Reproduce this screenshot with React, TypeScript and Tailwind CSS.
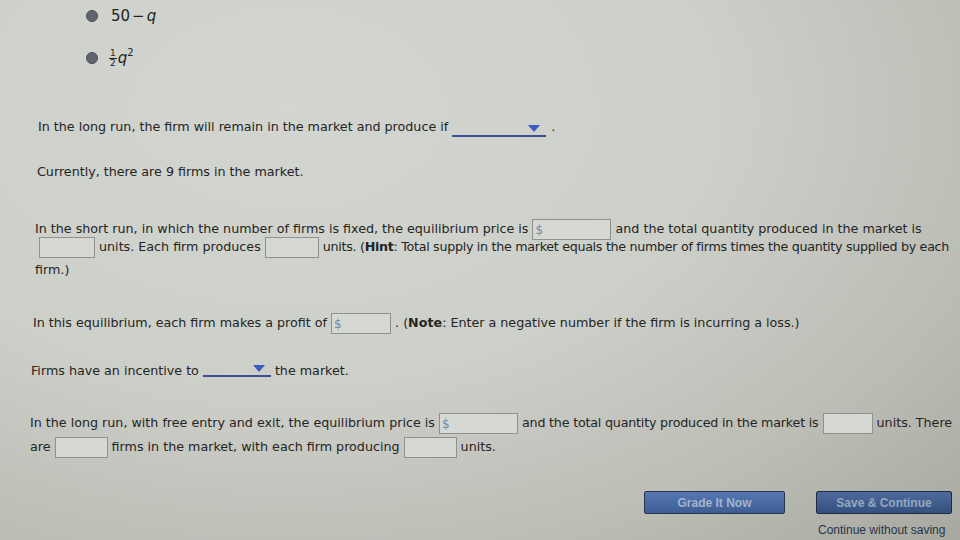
import React from 'react';

function Radio() {
  return <span className="inline-block h-[12px] w-[12px] rounded-full border border-[#4a4c55] bg-[#62646f]" />;
}

function Box({ w, dollar }: { w: string; dollar?: boolean }) {
  return (
    <span className={`my-[-3px] inline-flex h-[21px] ${w} items-center border border-[#8f918c] bg-[#d6d8d3] px-[2px] align-middle text-[12px] tracking-normal text-[#7388aa]`}>
      {dollar ? '$' : ''}
    </span>
  );
}

function Dropdown({ w }: { w: string }) {
  return (
    <span className={`relative inline-block h-[16px] ${w} border-b-2 border-[#3e4f98] align-middle`}>
      <span className="absolute right-[6px] top-[4px] h-0 w-0 border-x-[6px] border-t-[7px] border-x-transparent border-t-[#3b5bc4]" />
    </span>
  );
}

export default function App() {
  return (
    <div className="relative h-[540px] w-[960px] overflow-hidden bg-[radial-gradient(ellipse_at_30%_20%,#d3d5d0_0%,#cdcfc9_45%,#bcbdb5_75%,#a7a89f_100%)] font-['DejaVu_Sans',sans-serif] text-[12.7px] text-[#242523]">
      <div className="pl-[86px] pt-[6px]">
        <div className="flex h-[20px] items-center gap-[13px]">
          <Radio />
          <span className="text-[15px] text-[#222]">50<span className="mx-[2px]">−</span><i>q</i></span>
        </div>
        <div className="mt-[22px] flex h-[20px] items-center gap-[11px]">
          <Radio />
          <span className="flex items-center text-[15px] text-[#222]">
            <span className="flex flex-col items-center text-[9px] leading-[9px]">
              <span>1</span>
              <span className="border-t border-[#222] px-[1px]">2</span>
            </span>
            <i className="ml-[1px]">q</i>
            <sup className="text-[10px]">2</sup>
          </span>
        </div>
      </div>

      <div className="mt-[50px] pl-[38px]">
        <p className="flex h-[20px] items-end">
          <span className="mb-[2px]">In the long run, the firm will remain in the market and produce if</span>
          <span className="ml-[4px]"><Dropdown w="w-[94px]" /></span>
          <span className="mb-[2px] ml-[5px]">.</span>
        </p>
      </div>

      <p className="mt-[24px] pl-[37px] leading-[20px]">Currently, there are 9 firms in the market.</p>

      <div className="mt-[38px] whitespace-nowrap pl-[35px] leading-[18px]">
        <div>
          In the short run, in which the number of firms is fixed, the equilibrium price is <Box w="w-[79px]" dollar /> and the total quantity produced in the market is
        </div>
        <div>
          <span className="ml-[4px]" /><Box w="w-[56px]" /> units. Each firm produces <Box w="w-[54px]" /> <span className="tracking-[-0.3px]">units. (<b>Hint</b>: Total supply in the market equals the number of firms times the quantity supplied by each</span>
        </div>
        <div className="mt-[5px]">firm.)</div>
      </div>

      <p className="mt-[33px] whitespace-nowrap pl-[33px] leading-[22px]">
        In this equilibrium, each firm makes a profit of <Box w="w-[60px]" dollar /> . (<b>Note</b>: Enter a negative number if the firm is incurring a loss.)
      </p>

      <p className="mt-[26px] flex h-[22px] items-center pl-[31px]">
        <span>Firms have an incentive to</span>
        <span className="ml-[4px] mb-[6px]"><Dropdown w="w-[68px]" /></span>
        <span className="ml-[4px]">the market.</span>
      </p>

      <div className="mt-[29px] whitespace-nowrap pl-[30px] leading-[24px]">
        <div>
          In the long run, with free entry and exit, the equilibrium price is <Box w="w-[79px]" dollar /> <span className="tracking-[-0.2px]">and the total quantity produced in the market is</span> <Box w="w-[50px]" /> units. There
        </div>
        <div>
          are <Box w="w-[53px]" /> firms in the market, with each firm producing <Box w="w-[53px]" /> units.
        </div>
      </div>

      <div className="mt-[32px] flex justify-end gap-[31px] pr-[8px]">
        <button className="h-[23px] w-[141px] rounded-[2px] border border-[#26334f] bg-[linear-gradient(#5677b0,#3e5d95)] font-['Liberation_Sans',sans-serif] text-[12px] font-bold text-[#a3b4cd]">
          Grade It Now
        </button>
        <div className="flex flex-col items-start">
          <button className="h-[23px] w-[136px] rounded-[2px] border border-[#202b40] bg-[linear-gradient(#4d6a9c,#34507f)] font-['Liberation_Sans',sans-serif] text-[12px] font-bold text-[#95a6bf]">
            Save &amp; Continue
          </button>
          <span className="ml-[2px] mt-[9px] font-['Liberation_Sans',sans-serif] text-[12px] leading-[14px] text-[#27344a]">Continue without saving</span>
        </div>
      </div>
    </div>
  );
}
